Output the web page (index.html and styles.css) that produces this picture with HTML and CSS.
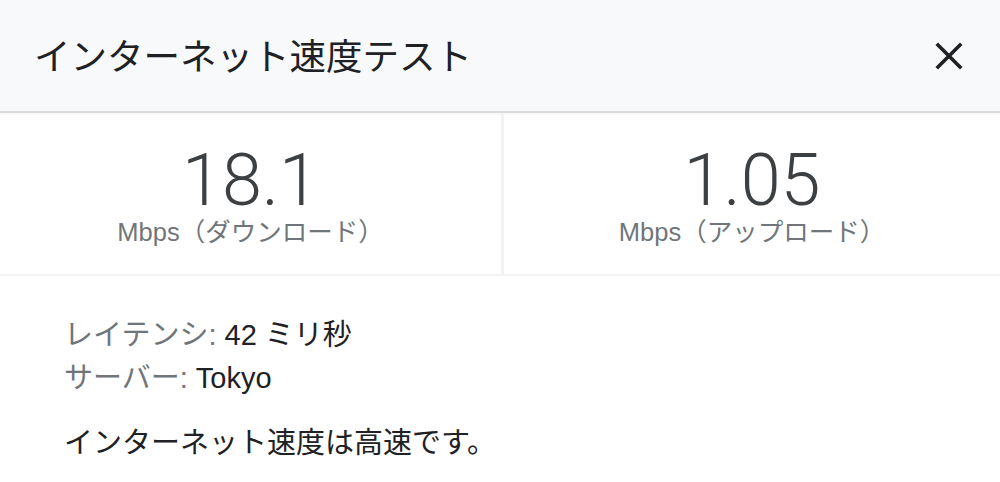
FILE: index.html
```html
<!DOCTYPE html>
<html lang="ja">
<head>
  <meta charset="UTF-8">
  <title>インターネット速度テスト</title>
  <link rel="stylesheet" href="styles.css">
</head>
<body>
  <div class="header">
    <div class="title">インターネット速度テスト</div>
    <svg class="close-icon" viewBox="0 0 28 28" width="28" height="28">
      <path d="M3 3 L25 25 M25 3 L3 25" stroke="#202124" stroke-width="3.6" stroke-linecap="square" fill="none"/>
    </svg>
  </div>

  <div class="stats">
    <div class="stat stat-left">
      <div class="stat-value">18.1</div>
      <div class="stat-label">Mbps（ダウンロード）</div>
    </div>
    <div class="stat">
      <div class="stat-value">1.05</div>
      <div class="stat-label">Mbps（アップロード）</div>
    </div>
  </div>

  <div class="info">
    <div class="info-row"><span class="info-key">レイテンシ:</span> 42 ミリ秒</div>
    <div class="info-row"><span class="info-key">サーバー:</span> Tokyo</div>
    <div class="summary">インターネット速度は高速です。</div>
  </div>
</body>
</html>
```

FILE: styles.css
```css
body {
  margin: 0;
  font-family: "Liberation Sans", "Noto Sans CJK JP", sans-serif;
  background: #fff;
  color: #202124;
}
.header {
  height: 111px;
  background: #f8f9fa;
  border-bottom: 2px solid #dadce0;
  box-shadow: 0 1px 2px rgba(0, 0, 0, 0.06);
  display: flex;
  align-items: center;
  justify-content: space-between;
  padding: 0 37px 0 34px;
}
.title { font-size: 36.5px; color: #202124; padding-bottom: 2px; }
.close-icon { display: block; }

.stats {
  display: grid;
  grid-template-columns: 504px 1fr;
  border-bottom: 2px solid #f1f3f4;
}
.stat {
  display: flex; flex-direction: column; align-items: center;
  padding: 32px 0 26px;
}
.stat-left { border-right: 3px solid #f1f3f4; }
.stat-value {
  font-family: Roboto, "Liberation Sans", sans-serif;
  font-weight: 300; font-size: 72px; line-height: 72px;
  color: #3c4043;
}
.stat-label { font-size: 25.5px; line-height: 31px; color: #70757a; }

.info { padding: 38px 0 0 64px; font-size: 29px; }
.info-row { line-height: 43px; }
.info-key { color: #70757a; }
.summary { margin-top: 22px; line-height: 43px; }
```
